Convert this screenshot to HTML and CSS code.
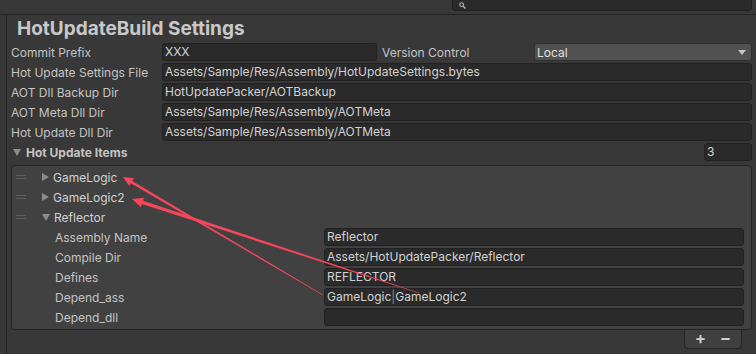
FILE: index.html
```html
<!DOCTYPE html>
<html lang="en">
<head>
    <meta charset="UTF-8">
    <meta name="viewport" content="width=device-width, initial-scale=1.0">
    <title>HotUpdateBuild Settings</title>
    <link rel="stylesheet" href="styles.css">
</head>
<body>
    <div class="window">
        <div class="toolbar">
            <div class="search">
                <svg class="search-icon" width="7" height="7" viewBox="0 0 7 7">
                    <circle cx="2.6" cy="2.6" r="1.9" fill="none" stroke="#b4b4b4" stroke-width="1.1"/>
                    <path d="M4 4 L6.4 6.4" stroke="#b4b4b4" stroke-width="1.4"/>
                </svg>
            </div>
        </div>

        <div class="inspector">
            <h1 class="title">HotUpdateBuild Settings</h1>

            <div class="row">
                <span class="label">Commit Prefix</span>
                <div class="field">XXX</div>
                <span class="label label-second">Version Control</span>
                <div class="dropdown">Local<span class="caret"></span></div>
            </div>
            <div class="row">
                <span class="label">Hot Update Settings File</span>
                <div class="field">Assets/Sample/Res/Assembly/HotUpdateSettings.bytes</div>
            </div>
            <div class="row">
                <span class="label">AOT Dll Backup Dir</span>
                <div class="field">HotUpdatePacker/AOTBackup</div>
            </div>
            <div class="row">
                <span class="label">AOT Meta Dll Dir</span>
                <div class="field">Assets/Sample/Res/Assembly/AOTMeta</div>
            </div>
            <div class="row">
                <span class="label">Hot Update Dll Dir</span>
                <div class="field">Assets/Sample/Res/Assembly/AOTMeta</div>
            </div>
            <div class="row">
                <span class="fold fold-open fold-header"></span>
                <span class="section-label">Hot Update Items</span>
                <div class="field count">3</div>
            </div>

            <!-- list of items -->
            <div class="list">
                <div class="item"><span class="handle"></span><span class="fold"></span>GameLogic</div>
                <div class="item"><span class="handle"></span><span class="fold"></span>GameLogic2</div>
                <div class="item"><span class="handle"></span><span class="fold fold-open"></span>Reflector</div>
                <div class="sub-row">
                    <span class="sub-label">Assembly Name</span>
                    <div class="field">Reflector</div>
                </div>
                <div class="sub-row">
                    <span class="sub-label">Compile Dir</span>
                    <div class="field">Assets/HotUpdatePacker/Reflector</div>
                </div>
                <div class="sub-row">
                    <span class="sub-label">Defines</span>
                    <div class="field">REFLECTOR</div>
                </div>
                <div class="sub-row">
                    <span class="sub-label">Depend_ass</span>
                    <div class="field">GameLogic<span class="bar">|</span>GameLogic2</div>
                </div>
                <div class="sub-row">
                    <span class="sub-label">Depend_dll</span>
                    <div class="field"></div>
                </div>
            </div>
            <div class="list-footer">
                <div class="footer-buttons"><span>+</span><span>&minus;</span></div>
            </div>
        </div>

        <!-- annotation arrows drawn over the screenshot -->
        <svg class="arrows" width="756" height="354" viewBox="0 0 756 354">
            <polygon fill="#f4475b" points="123,177 133.9,178.2 132.3,180.9 323.2,294.7 322.8,295.3 130.9,183.3 129.3,186"/>
            <polygon fill="#f4475b" points="132,199 144,197.7 143.1,200.7 419.1,292.7 418.9,293.3 141.9,204.1 140.9,207.2"/>
        </svg>
    </div>
</body>
</html>
```

FILE: styles.css
```css
body {
    margin: 0;
    background-color: #383838;
    font-family: Inter, "Noto Sans", sans-serif;
    font-size: 12px;
    color: #c4c4c4;
    overflow: hidden;
}

.window {
    position: relative;
    width: 756px;
    height: 354px;
}

/* toolbar ========================================================= */

.toolbar {
    height: 14px;
    border-bottom: 1px solid #232323;
    display: flex;
    justify-content: flex-end;
    padding-right: 4px;
}

.search {
    box-sizing: border-box;
    width: 300px;
    height: 11px;
    background-color: #2a2a2a;
    border: 1px solid #1f1f1f;
    border-top: none;
    border-radius: 0 0 4px 4px;
    display: flex;
    align-items: center;
    padding-left: 6px;
}

.search-icon {
    display: block;
}

/* inspector ======================================================= */

.inspector {
    margin-left: 6px;
    border-left: 1px solid #232323;
    padding: 0 4px;
    height: 339px;
    box-sizing: border-box;
}

.title {
    margin: 0;
    height: 27px;
    line-height: 27px;
    padding-left: 6px;
    font-size: 19px;
    font-weight: bold;
    color: #c8c8c8;
}

.row {
    display: flex;
    align-items: center;
    height: 20px;
}

.label {
    width: 151px;
    flex: none;
    white-space: nowrap;
}

.label-second {
    margin-left: 5px;
    width: 152px;
}

.field {
    flex: 1;
    height: 18px;
    box-sizing: border-box;
    background-color: #2a2a2a;
    border: 1px solid #212121;
    border-radius: 3px;
    padding: 0 2px;
    line-height: 16px;
    color: #d2d2d2;
    white-space: nowrap;
    overflow: hidden;
}

.field.count {
    flex: none;
    width: 48px;
    margin-left: auto;
}

.bar {
    color: #8a8a8a;
}

.dropdown {
    flex: 1;
    height: 18px;
    box-sizing: border-box;
    background-color: #515151;
    border: 1px solid #303030;
    border-radius: 3px;
    padding: 0 5px 0 2px;
    display: flex;
    align-items: center;
    justify-content: space-between;
    color: #e0e0e0;
}

.caret {
    width: 0;
    height: 0;
    border-left: 4px solid transparent;
    border-right: 4px solid transparent;
    border-top: 5px solid #c4c4c4;
}

/* foldouts ======================================================== */

.fold {
    width: 0;
    height: 0;
    flex: none;
    border-top: 4px solid transparent;
    border-bottom: 4px solid transparent;
    border-left: 7px solid #8c8c8c;
    margin-right: 4px;
}

.fold-open {
    border-left: 4px solid transparent;
    border-right: 4px solid transparent;
    border-top: 7px solid #8c8c8c;
    border-bottom: none;
}

.fold-header {
    margin-left: 2px;
    margin-right: 5px;
}

.section-label {
    font-weight: bold;
}

/* list ============================================================ */

.list {
    margin-top: 3px;
    border: 1px solid #242424;
    border-radius: 4px;
    background-color: #414141;
    padding: 1px 0 2px 0;
}

.item {
    height: 20px;
    display: flex;
    align-items: center;
    color: #d2d2d2;
}

.handle {
    margin-left: 4px;
    margin-right: 16px;
    width: 10px;
    height: 2px;
    border-top: 1px solid #5e5e5e;
    border-bottom: 1px solid #5e5e5e;
}

.sub-row {
    height: 20px;
    display: flex;
    align-items: center;
    padding-left: 43px;
    padding-right: 7px;
}

.sub-label {
    width: 269px;
    flex: none;
}

.list-footer {
    display: flex;
    justify-content: flex-end;
    padding-right: 10px;
}

.footer-buttons {
    width: 58px;
    height: 19px;
    box-sizing: border-box;
    background-color: #3f3f3f;
    border: 1px solid #242424;
    border-top: none;
    border-radius: 0 0 4px 4px;
    display: flex;
    justify-content: center;
    gap: 10px;
    font-size: 17px;
    font-weight: 600;
    line-height: 17px;
    color: #cfcfcf;
}

.footer-buttons span {
    width: 15px;
    text-align: center;
}

.arrows {
    position: absolute;
    top: 0;
    left: 0;
    pointer-events: none;
}
```
